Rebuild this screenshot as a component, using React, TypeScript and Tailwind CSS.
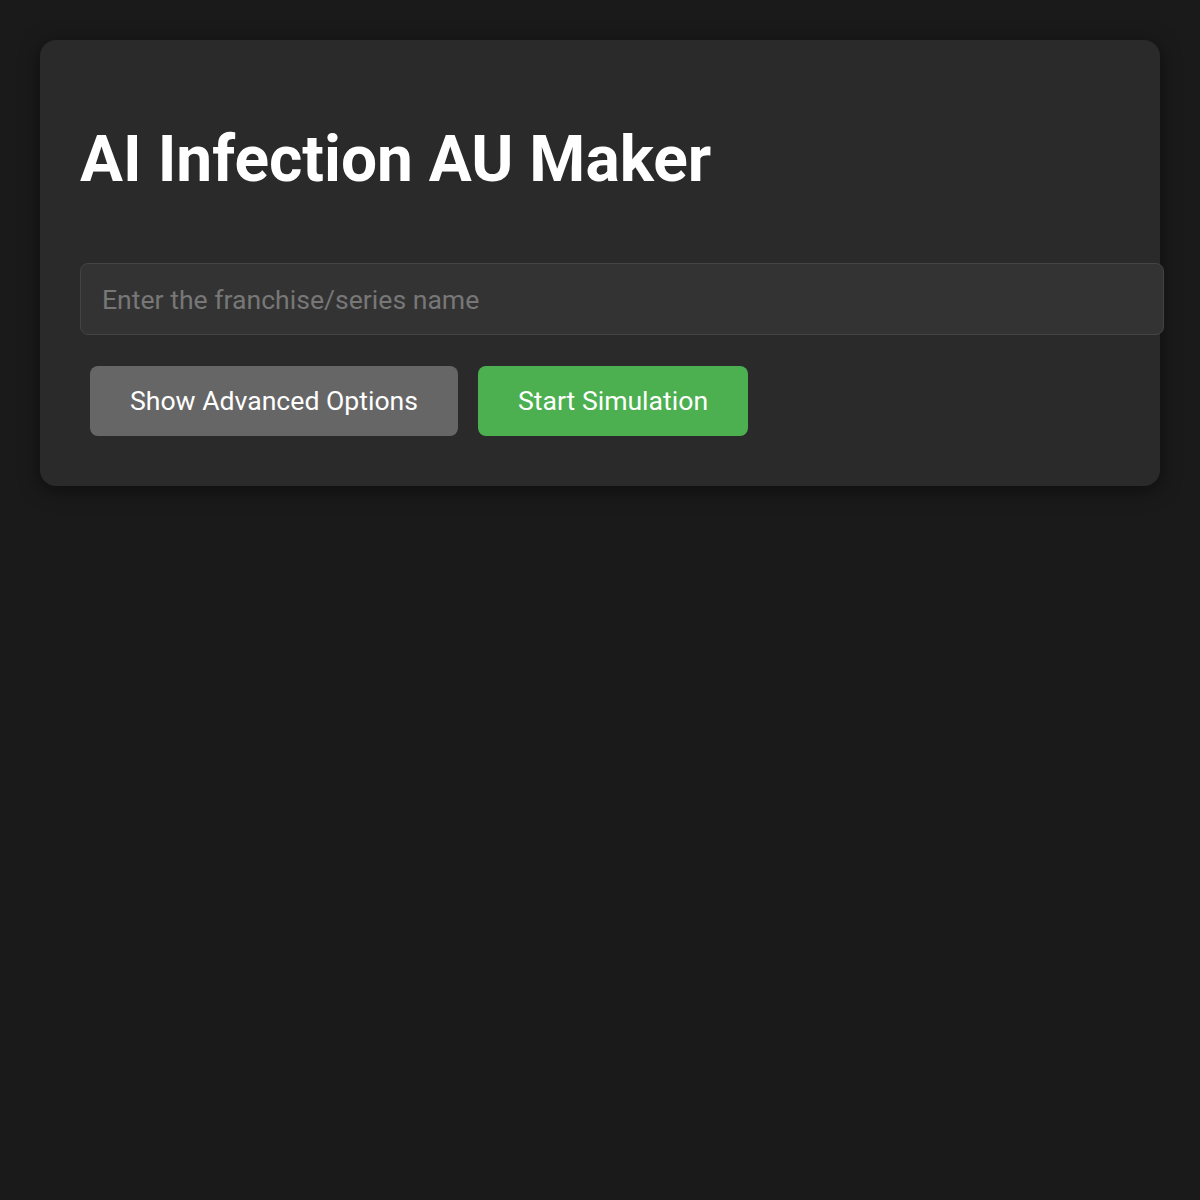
export default function App() {
  return (
    <div className="min-h-[1200px] bg-[#1a1a1a] p-10 font-['Roboto',sans-serif] text-white">
      <div className="rounded-2xl bg-[#2a2a2a] p-10 shadow-[0_4px_20px_rgba(0,0,0,0.5)]">
        <h1 className="mt-[42px] mb-[66px] text-[64px] leading-[75px] font-bold">AI Infection AU Maker</h1>

        <input
          type="text"
          placeholder="Enter the franchise/series name"
          className="block h-[72px] w-[1084px] rounded-lg border border-[#444] bg-[#333] px-[21px] text-[26.6px] text-white placeholder:text-[#777] outline-none"
        />

        <div className="mt-[21px] flex">
          <button className="m-[10px] h-[70px] rounded-lg bg-[#666] px-10 text-[26.6px] text-white">
            Show Advanced Options
          </button>
          <button className="m-[10px] h-[70px] rounded-lg bg-[#4caf50] px-10 text-[26.6px] text-white">
            Start Simulation
          </button>
        </div>
      </div>
    </div>
  );
}
